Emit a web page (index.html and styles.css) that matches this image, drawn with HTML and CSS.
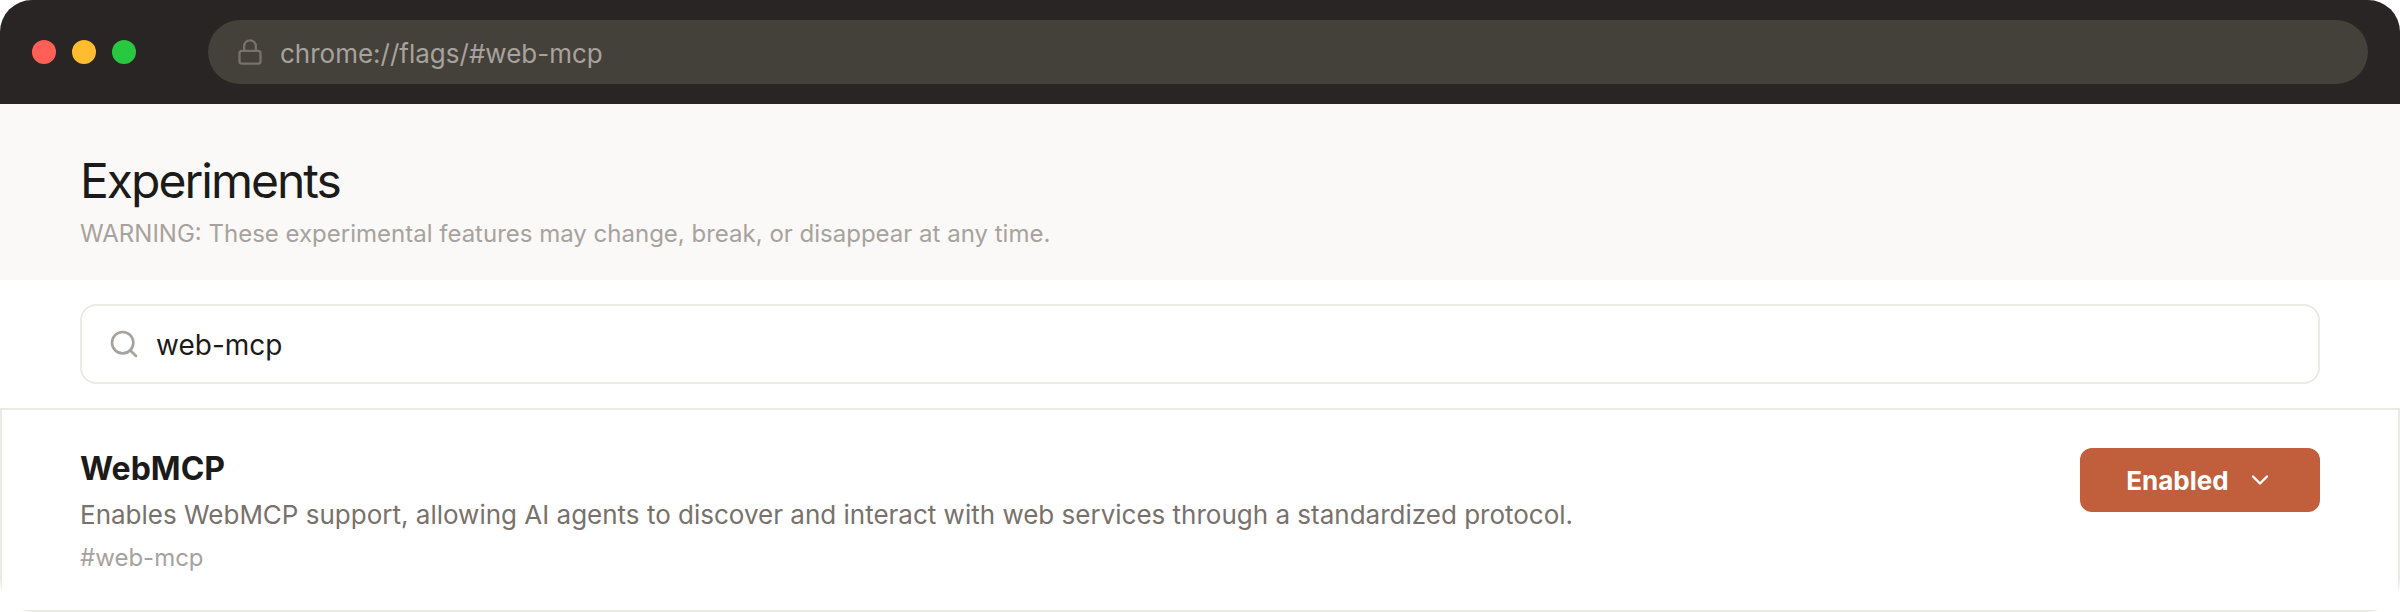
FILE: index.html
```html
<!DOCTYPE html>
<html lang="en">
<head>
    <meta charset="UTF-8">
    <title>Experiments</title>
    <link rel="stylesheet" href="styles.css">
</head>
<body>
    <div class="browser">
        <div class="toolbar">
            <div class="dots">
                <span class="dot red"></span>
                <span class="dot yellow"></span>
                <span class="dot green"></span>
            </div>
            <div class="address">
                <svg class="lock" viewBox="0 0 24 24">
                    <rect x="3" y="11" width="18" height="11" rx="2"/>
                    <path d="M7 11V7a5 5 0 0 1 10 0v4"/>
                </svg>
                <span>chrome://flags/#web-mcp</span>
            </div>
        </div>
        <div class="header">
            <h1>Experiments</h1>
            <p>WARNING: These experimental features may change, break, or disappear at any time.</p>
        </div>
        <div class="search">
            <div class="search-box">
                <svg class="search-icon" viewBox="0 0 24 24">
                    <circle cx="11" cy="11" r="8"/>
                    <path d="M21 21l-4.35-4.35"/>
                </svg>
                <span>web-mcp</span>
            </div>
        </div>
        <div class="flag">
            <div class="flag-info">
                <h2>WebMCP</h2>
                <p class="description">Enables WebMCP support, allowing AI agents to discover and interact with web services through a standardized protocol.</p>
                <p class="tag">#web-mcp</p>
            </div>
            <button>
                Enabled
                <svg class="chevron" viewBox="0 0 24 24">
                    <path d="M6 9l6 6 6-6"/>
                </svg>
            </button>
        </div>
    </div>
</body>
</html>
```
FILE: styles.css
```css
* { box-sizing: border-box; }
body { font-family: Inter, sans-serif; margin: 0; background: #fff; color: #1c1b1a; }
h1, h2, p { margin: 0; }
svg { fill: none; stroke-width: 2; stroke-linecap: round; stroke-linejoin: round; flex-shrink: 0; }
.browser { height: 612px; border-radius: 32px; overflow: hidden; background: #fff; }
.toolbar { display: flex; align-items: center; height: 104px; padding: 0 32px; background: #292524; }
.dots { display: flex; gap: 16px; margin-right: 72px; }
.dot { width: 24px; height: 24px; border-radius: 50%; }
.red { background: #ff5f57; }
.yellow { background: #febc2e; }
.green { background: #28c840; }
.address { display: flex; flex: 1; align-items: center; height: 64px; padding-left: 28px; border-radius: 32px; background: #44403a; color: #a8a29e; font-size: 26px; }
.address span { padding-top: 2px; }
.lock { width: 28px; height: 28px; margin-right: 16px; stroke: #78716c; }
.header { height: 176px; padding: 48px 80px 0; background: #faf9f7; }
.header h1 { font-size: 48px; font-weight: 400; line-height: 58px; letter-spacing: -2px; }
.header p { margin-top: 8px; font-size: 24px; line-height: 32px; color: #a8a29e; }
.search { height: 128px; padding: 24px 80px; }
.search-box { display: flex; align-items: center; height: 80px; padding-left: 26px; border: 2px solid #ebebe6; border-radius: 16px; font-size: 28px; }
.search-box span { padding-top: 2px; }
.search-icon { width: 32px; height: 32px; margin-right: 16px; stroke: #a8a29e; }
.flag { display: flex; justify-content: space-between; align-items: flex-start; height: 204px; padding: 38px 78px 0; border: 2px solid #ebebe6; }
.flag h2 { font-size: 32px; font-weight: 700; line-height: 42px; }
.description { margin-top: 7px; font-size: 26px; line-height: 36px; color: #78716c; }
.tag { margin-top: 9px; font-size: 24px; line-height: 32px; color: #a8a29e; }
button { display: flex; align-items: center; justify-content: center; gap: 17px; width: 240px; height: 64px; padding: 0; border: none; border-radius: 12px; background: #c15f3c; color: #fff; font-family: inherit; font-size: 26px; font-weight: 700; }
.chevron { width: 28px; height: 28px; stroke: #fff; }
```
